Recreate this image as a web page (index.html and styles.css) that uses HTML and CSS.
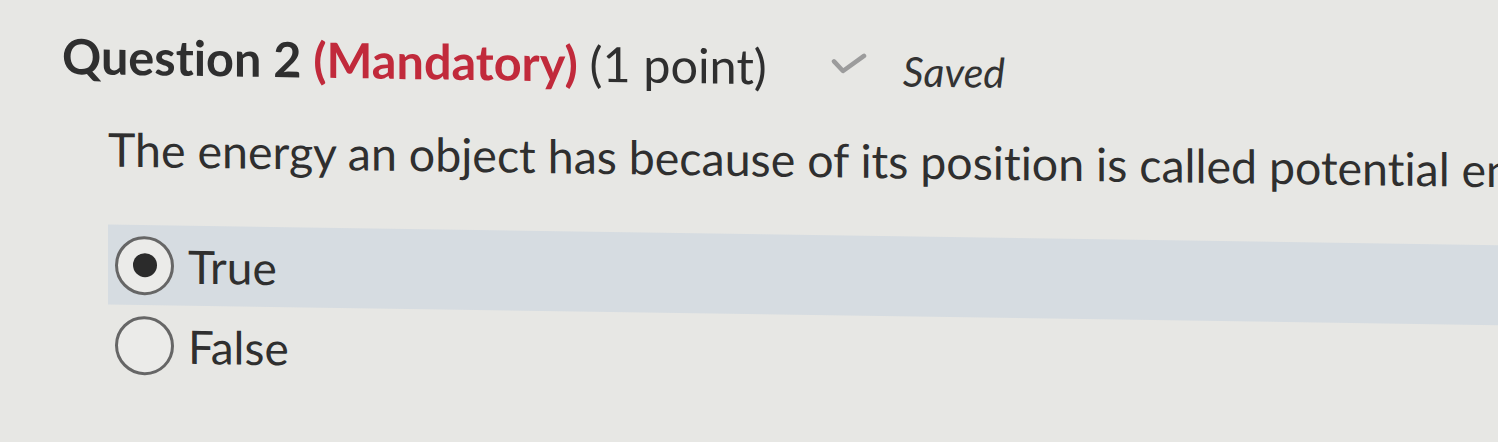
FILE: index.html
```html
<!DOCTYPE html>
<html lang="en">
<head>
    <meta charset="UTF-8">
    <title>Quiz - Question 2</title>
    <link rel="stylesheet" href="styles.css">
</head>
<body>
    <div class="quiz">
        <div class="question-header">
            <h2 class="question-title">
                Question 2 <span class="mandatory">(Mandatory)</span> <span class="points">(1 point)</span>
            </h2>
            <span class="save-status">
                <svg class="check" width="36" height="22" viewBox="0 0 36 22">
                    <path d="M3 9 L12 18.5 L33 3" fill="none" stroke="#9c9c9c" stroke-width="4.5" stroke-linecap="round" stroke-linejoin="round"/>
                </svg>
                <em>Saved</em>
            </span>
        </div>

        <p class="question-text">The energy an object has because of its position is called potential energy.</p>

        <div class="answers">
            <label class="answer selected">
                <span class="radio checked"></span>
                <span class="answer-label">True</span>
            </label>
            <label class="answer">
                <span class="radio"></span>
                <span class="answer-label">False</span>
            </label>
        </div>
    </div>
</body>
</html>
```

FILE: styles.css
```css
html, body {
    margin: 0;
    height: 100%;
    overflow: hidden;
    background-color: #e7e7e4;
}

body {
    font-family: Lato, "Open Sans", sans-serif;
    font-variant-ligatures: none;
    color: #2f2f2f;
}

/* the whole card leans slightly, the way the screen was viewed */
.quiz {
    padding: 25px 0 0 62px;
    white-space: nowrap;
    transform: skewY(0.85deg);
    transform-origin: left top;
}

.question-header {
    display: flex;
    align-items: baseline;
    gap: 64px;
}

.question-title {
    margin: 0;
    font-size: 48.6px;
    font-weight: 700;
}

.mandatory {
    color: #c12a3b;
}

.points {
    font-weight: 400;
}

.save-status {
    display: flex;
    align-items: baseline;
    gap: 36px;
    font-size: 41px;
    color: #333;
}

.check {
    position: relative;
    top: -11px;
}

.save-status em {
    font-style: italic;
}

.question-text {
    margin: 36px 0 0 46px;
    font-size: 46.5px;
}

.answers {
    margin: 48px 0 0 46px;
}

.answer {
    display: flex;
    align-items: center;
    gap: 14px;
    height: 80px;
    padding-left: 7px;
    font-size: 46px;
}

.answer.selected {
    background-color: #d6dce1;
}

.radio {
    box-sizing: border-box;
    width: 59px;
    height: 59px;
    border: 3px solid #666;
    border-radius: 50%;
    display: flex;
    align-items: center;
    justify-content: center;
    background-color: #ebebe9;
}

.radio.checked::after {
    content: "";
    width: 24px;
    height: 24px;
    border-radius: 50%;
    background-color: #2b2b2b;
}
```
